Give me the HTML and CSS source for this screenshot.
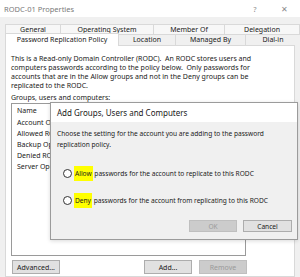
FILE: index.html
```html
<!DOCTYPE html>
<html lang="en">
<head>
  <meta charset="UTF-8">
  <title>RODC-01 Properties</title>
  <link rel="stylesheet" href="styles.css">
</head>
<body>

  <div class="window">
    <div class="titlebar">
      <span class="title">RODC-01 Properties</span>
      <span class="help">?</span>
      <span class="close">&#x2715;</span>
    </div>

    <div class="tabs">
      <div class="tab-row">
        <div class="tab t-general">General</div>
        <div class="tab t-os">Operating System</div>
        <div class="tab t-member">Member Of</div>
        <div class="tab t-deleg">Delegation</div>
      </div>
      <div class="tab-row">
        <div class="tab active t-prp">Password Replication Policy</div>
        <div class="tab t-loc">Location</div>
        <div class="tab t-man">Managed By</div>
        <div class="tab t-dial">Dial-in</div>
      </div>
    </div>

    <div class="panel">
      <p class="intro">This is a Read-only Domain Controller (RODC).&nbsp; An RODC stores users and<br>computers passwords according to the policy below.&nbsp; Only passwords for<br>accounts that are in the Allow groups and not in the Deny groups can be<br>replicated to the RODC.</p>
      <div class="label">Groups, users and computers:</div>

      <div class="listbox">
        <div class="list-head">Name</div>
        <ul class="list">
          <li>Account Operators</li>
          <li>Allowed RODC Password Replication Group</li>
          <li>Backup Operators</li>
          <li>Denied RODC Password Replication Group</li>
          <li>Server Operators</li>
        </ul>
      </div>

      <div class="actions">
        <button class="btn">Advanced...</button>
        <span class="spacer"></span>
        <button class="btn">Add...</button>
        <button class="btn" disabled>Remove</button>
      </div>
    </div>

    <!-- modal over the property page -->
    <div class="dialog">
      <div class="dialog-head">Add Groups, Users and Computers</div>
      <div class="dialog-body">
        <p class="dialog-text">Choose the setting for the account you are adding to the password<br>replication policy.</p>
        <label class="option first">
          <span class="radio"></span>
          <span><mark>Allow</mark> passwords for the account to replicate to this RODC</span>
        </label>
        <label class="option">
          <span class="radio"></span>
          <span><mark>Deny</mark> passwords for the account from replicating to this RODC</span>
        </label>
        <div class="dialog-buttons">
          <button class="btn ok" disabled>OK</button>
          <button class="btn cancel">Cancel</button>
        </div>
      </div>
    </div>
  </div>

</body>
</html>
```

FILE: styles.css
```css
body {
  margin: 0;
  padding: 0;
  font-family: 'Noto Sans', 'Open Sans', sans-serif;
  font-size: 7px;
  color: #1a1a1a;
  background: #f0f0f0;
}

.window {
  position: relative;
  width: 300px;
  height: 277px;
  overflow: hidden;
  background: #f0f0f0;
  display: flex;
  flex-direction: column;
}

.titlebar {
  height: 17px;
  flex: none;
  background: #fff;
  display: flex;
  align-items: center;
  padding-left: 4px;
  color: #7a7a7a;
  font-size: 7.5px;
}

.title {
  flex: 1;
}

.help {
  width: 10px;
  text-align: center;
  margin-right: 19px;
  color: #8a8a8a;
}

.close {
  width: 10px;
  text-align: center;
  margin-right: 11px;
  color: #8a8a8a;
  font-size: 8px;
}

.tabs {
  margin-top: 7px;
  padding-left: 5px;
  flex: none;
}

.tab-row {
  display: flex;
  height: 10px;
}

.tab-row + .tab-row {
  height: 11px;
}

.tab {
  flex: none;
  box-sizing: border-box;
  border: 1px solid #d9d9d9;
  border-bottom: none;
  margin-right: -1px;
  background: #f0f0f0;
  text-align: center;
  line-height: 10px;
}

.tab-row:first-child .tab {
  background: #f7f7f7;
}

.tab.active {
  position: relative;
  z-index: 2;
  background: #fff;
  height: 13px;
  margin-top: -1px;
  line-height: 12px;
}

.t-general { width: 56px; }
.t-os { width: 94px; }
.t-member { width: 72px; }
.t-deleg { width: 76px; }
.t-prp { width: 114px; }
.t-loc { width: 58px; }
.t-man { width: 71px; }
.t-dial { width: 56px; }

.panel {
  flex: 1;
  margin: 0 5px 0 5px;
  background: #fff;
  border: 1px solid #d9d9d9;
  padding: 8px 0 0 5px;
}

.intro {
  margin: 0;
  line-height: 9px;
  white-space: nowrap;
}

.label {
  margin-top: 3px;
  line-height: 9px;
}

.listbox {
  margin-top: 1px;
  box-sizing: border-box;
  width: 235px;
  height: 153px;
  border: 1px solid #9a9a9a;
  background: #fff;
}

.list-head {
  height: 13px;
  line-height: 13px;
  padding-left: 5px;
}

.list {
  list-style: none;
  margin: 0;
  padding: 0 0 0 5px;
}

.list li {
  line-height: 11px;
  white-space: nowrap;
}

.actions {
  display: flex;
  gap: 7px;
  width: 235px;
  margin-top: 4px;
  margin-left: 1px;
}

.spacer {
  flex: 1;
}

.btn {
  box-sizing: border-box;
  width: 48px;
  height: 14px;
  padding: 0;
  font-family: inherit;
  font-size: 7px;
  color: #1a1a1a;
  background: #e1e1e1;
  border: 1px solid #adadad;
  border-radius: 0;
}

.btn:disabled {
  background: #cccccc;
  border-color: #bfbfbf;
  color: #9a9a9a;
}

.dialog {
  position: absolute;
  left: 50px;
  top: 102px;
  width: 248px;
  height: 138px;
  box-sizing: border-box;
  border: 1px solid #9b9b9b;
  background: #f0f0f0;
  display: flex;
  flex-direction: column;
  box-shadow: 0 1px 4px rgba(0, 0, 0, 0.15);
  font-size: 6.6px;
}

.dialog-head {
  height: 19px;
  line-height: 19px;
  flex: none;
  background: #fff;
  padding-left: 6px;
  font-size: 8px;
}

.dialog-body {
  flex: 1;
  display: flex;
  flex-direction: column;
  padding: 6px 5px 7px 6px;
}

.dialog-text {
  margin: 0;
  line-height: 11px;
  white-space: nowrap;
}

.option {
  display: flex;
  align-items: center;
  height: 13px;
  margin-top: 14px;
  margin-left: 6px;
  white-space: nowrap;
}

.option.first {
  margin-top: 17px;
}

.radio {
  box-sizing: border-box;
  width: 9px;
  height: 9px;
  border: 1px solid #333;
  border-radius: 50%;
  background: #fff;
  margin-right: 2px;
  flex: none;
}

mark {
  background: #ffff00;
  color: #1a1a1a;
  padding: 3px 1px;
}

.dialog-buttons {
  margin-top: auto;
  display: flex;
  justify-content: flex-end;
  gap: 6px;
}

.dialog-buttons .btn {
  height: 12px;
  font-size: 6.6px;
}

.cancel {
  width: 49px;
}
```
